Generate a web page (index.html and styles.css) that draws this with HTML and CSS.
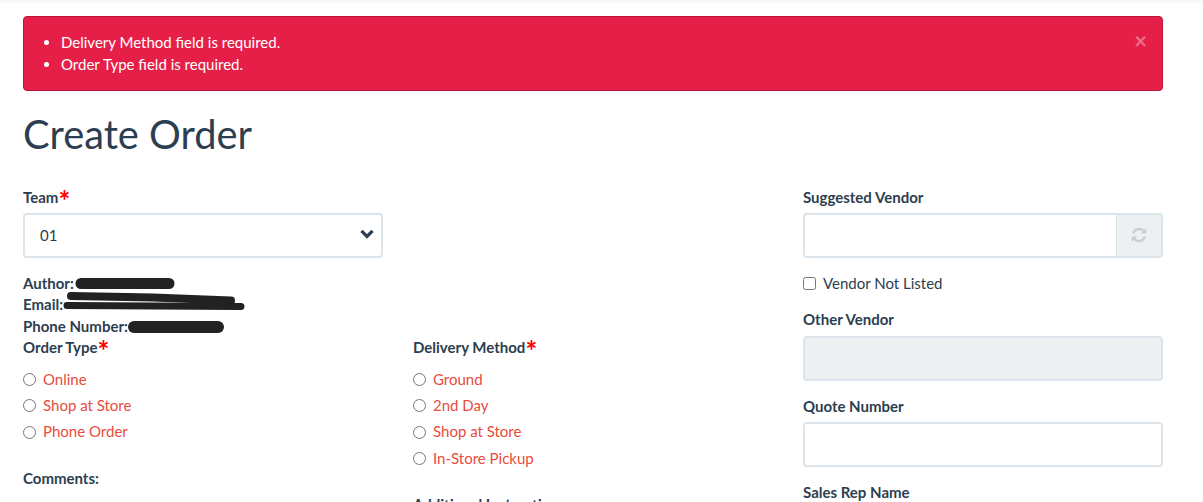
FILE: index.html
```html
<!DOCTYPE html>
<html lang="en">
<head>
    <meta charset="UTF-8">
    <meta name="viewport" content="width=device-width, initial-scale=1.0">
    <title>Create Order</title>
    <link rel="stylesheet" href="styles.css">
</head>
<body>
    <div class="top-shade"></div>
    <div class="container">
        <div class="alert">
            <button class="close" type="button">&times;</button>
            <ul>
                <li>Delivery Method field is required.</li>
                <li>Order Type field is required.</li>
            </ul>
        </div>
        <h1>Create Order</h1>
        <form class="order-form">
            <div class="main-col">
                <div class="team-row">
                    <label class="field-label" for="team">Team<span class="req">*</span></label>
                    <div class="select-wrap">
                        <select id="team" class="control">
                            <option>01</option>
                        </select>
                        <svg class="chevron" width="14" height="10" viewBox="0 0 14 10">
                            <polyline points="1.5,1.8 7,7.4 12.5,1.8" fill="none" stroke="#2c3e50" stroke-width="3.2"/>
                        </svg>
                    </div>
                </div>
                <div class="author-info">
                    <div>Author:</div>
                    <div>Email:</div>
                    <div>Phone Number:</div>
                    <svg class="redact" width="240" height="64" viewBox="0 0 240 64">
                        <path d="M58 10.5 L146 10.5" stroke="#222" stroke-width="11" stroke-linecap="round" fill="none"/>
                        <path d="M48 23 L130 24.5 L208 27.5" stroke="#222" stroke-width="8" stroke-linecap="round" fill="none"/>
                        <path d="M44 32.5 L218 33.5" stroke="#222" stroke-width="7" stroke-linecap="round" fill="none"/>
                        <path d="M111 54 L195 54" stroke="#222" stroke-width="12" stroke-linecap="round" fill="none"/>
                    </svg>
                </div>
                <div class="choice-cols">
                    <div>
                        <div class="field-label">Order Type<span class="req">*</span></div>
                        <div class="choices">
                            <label class="choice"><input type="radio" name="orderType">Online</label>
                            <label class="choice"><input type="radio" name="orderType">Shop at Store</label>
                            <label class="choice"><input type="radio" name="orderType">Phone Order</label>
                        </div>
                        <div class="field-label">Comments:</div>
                    </div>
                    <div>
                        <div class="field-label">Delivery Method<span class="req">*</span></div>
                        <div class="choices">
                            <label class="choice"><input type="radio" name="delivery">Ground</label>
                            <label class="choice"><input type="radio" name="delivery">2nd Day</label>
                            <label class="choice"><input type="radio" name="delivery">Shop at Store</label>
                            <label class="choice"><input type="radio" name="delivery">In-Store Pickup</label>
                        </div>
                        <div class="field-label">Additional Instructions</div>
                    </div>
                </div>
            </div>
            <div class="side-col">
                <div class="form-group">
                    <label class="field-label" for="vendor">Suggested Vendor</label>
                    <div class="input-group">
                        <input id="vendor" class="control" type="text">
                        <span class="addon">
                            <svg width="16" height="16" viewBox="0 0 16 16">
                                <path d="M2.2 6.6 A6 6 0 0 1 12.6 4" fill="none" stroke="#c6ccd0" stroke-width="2.2"/>
                                <path d="M10 6.4 L15.2 6.4 L15.2 1.2 Z" fill="#c6ccd0"/>
                                <path d="M13.8 9.4 A6 6 0 0 1 3.4 12" fill="none" stroke="#c6ccd0" stroke-width="2.2"/>
                                <path d="M6 9.6 L0.8 9.6 L0.8 14.8 Z" fill="#c6ccd0"/>
                            </svg>
                        </span>
                    </div>
                </div>
                <label class="not-listed"><input type="checkbox">Vendor Not Listed</label>
                <div class="form-group">
                    <label class="field-label" for="otherVendor">Other Vendor</label>
                    <input id="otherVendor" class="control" type="text" disabled>
                </div>
                <div class="form-group">
                    <label class="field-label" for="quote">Quote Number</label>
                    <input id="quote" class="control" type="text">
                </div>
                <div class="form-group">
                    <label class="field-label" for="salesRep">Sales Rep Name</label>
                    <input id="salesRep" class="control" type="text">
                </div>
            </div>
        </form>
    </div>
</body>
</html>
```

FILE: styles.css
```css
html, body {
    height: 100%;
    overflow: hidden;
}
body {
    margin: 0;
    background-color: #fff;
    font-family: Lato, "Liberation Sans", sans-serif;
    font-size: 15px;
    line-height: 21.4px;
    color: #2c3e50;
}
.top-shade {
    height: 3px;
    background-color: #f8f8f8;
}
.container {
    width: 1140px;
    padding: 13px 0 0 23px;
}
.alert {
    position: relative;
    box-sizing: border-box;
    height: 75px;
    padding: 15px;
    margin-bottom: 21px;
    background-color: #e61f48;
    border: 1px solid #b8163a;
    border-radius: 4px;
    color: #fff;
}
.alert ul {
    margin: 0;
    padding-left: 22px;
    line-height: 21.7px;
}
.close {
    position: absolute;
    top: 13px;
    right: 15px;
    padding: 0;
    border: 0;
    background: none;
    font-family: inherit;
    font-size: 22px;
    font-weight: bold;
    line-height: 21px;
    color: #fff;
    opacity: 0.35;
}
h1 {
    margin: 0 0 31.5px;
    font-size: 39.8px;
    font-weight: 400;
    line-height: 43px;
}
.order-form {
    display: grid;
    grid-template-columns: 750px 360px;
    column-gap: 30px;
}
.field-label {
    display: block;
    margin-bottom: 5px;
    font-weight: bold;
}
.req {
    color: #f00;
    font-size: 28px;
    line-height: 0;
    vertical-align: -8px;
}
.control {
    display: block;
    box-sizing: border-box;
    width: 100%;
    height: 45px;
    padding: 10px 15px;
    background-color: #fff;
    border: 2px solid #dce4ec;
    border-radius: 4px;
    font-family: inherit;
    font-size: 15px;
    color: #2c3e50;
    outline: none;
}
.control:disabled {
    background-color: #ecf0f1;
}
.team-row {
    width: 360px;
    margin-bottom: 15px;
}
.select-wrap {
    position: relative;
}
.select-wrap select {
    appearance: none;
}
.chevron {
    position: absolute;
    top: 16px;
    right: 9px;
}
.author-info {
    position: relative;
    font-weight: bold;
}
.redact {
    position: absolute;
    top: 0;
    left: 0;
}
.choice-cols {
    display: grid;
    grid-template-columns: 360px 360px;
    column-gap: 30px;
}
.choice-cols .field-label {
    margin-bottom: 0;
}
.choices {
    display: flex;
    flex-direction: column;
    gap: 5px;
    margin: 10px 0 25px;
}
.choice {
    display: flex;
    align-items: center;
    color: #e74c3c;
}
.choice input, .not-listed input {
    width: 13px;
    height: 13px;
    margin: 0 7px 0 0;
}
.form-group {
    margin-bottom: 15px;
}
.input-group {
    display: flex;
}
.input-group .control {
    border-right: 0;
    border-radius: 4px 0 0 4px;
}
.addon {
    display: flex;
    flex: 0 0 47px;
    box-sizing: border-box;
    align-items: center;
    justify-content: center;
    background-color: #ecf0f1;
    border: 2px solid #dce4ec;
    border-left-width: 1px;
    border-radius: 0 4px 4px 0;
}
.not-listed {
    display: flex;
    align-items: center;
    margin-bottom: 15px;
}
```
